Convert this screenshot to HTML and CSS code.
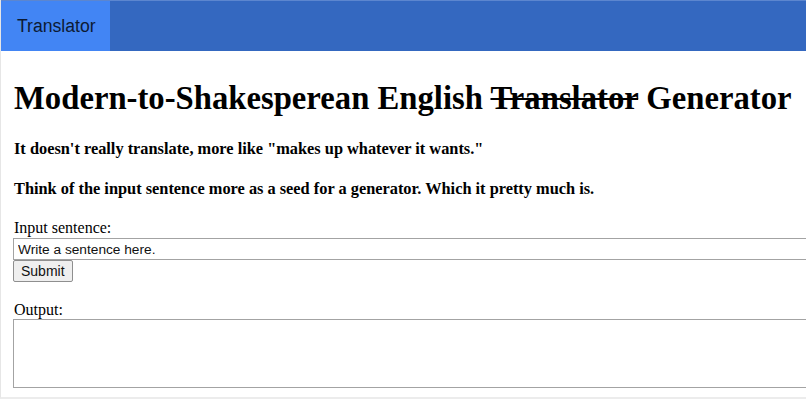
FILE: index.html
```html
<!DOCTYPE html>
<html>
<head>
<meta charset="utf-8">
<title>Translator</title>
<link rel="stylesheet" href="styles.css">
</head>
<body>
<div class="frame">
  <nav class="navbar">
    <a class="tab active" href="#">Translator</a>
  </nav>
  <main class="content">
    <h1 class="title">Modern-to-Shakesperean English <s>Translator</s> Generator</h1>
    <h4 class="note">It doesn't really translate, more like "makes up whatever it wants."</h4>
    <h4 class="note">Think of the input sentence more as a seed for a generator. Which it pretty much is.</h4>
    <form class="form">
      <label class="label" for="inp">Input sentence:</label>
      <input class="input" id="inp" type="text" value="Write a sentence here.">
      <button class="submit" type="button">Submit</button>
      <label class="label out-label" for="out">Output:</label>
      <textarea class="output" id="out"></textarea>
    </form>
  </main>
</div>
</body>
</html>
```
FILE: styles.css
```css
html, body {
  margin: 0;
  padding: 0;
  background: #ffffff;
}
body {
  font-family: "Liberation Serif", "Times New Roman", serif;
  color: #000;
  width: 806px;
  height: 413px;
  overflow: hidden;
}
.frame {
  border-left: 1px solid #e6e6e6;
  border-bottom: 2px solid #ececec;
  height: 397px;
  overflow: hidden;
}
.navbar {
  display: flex;
  height: 50px;
  background: #3468c0;
  border-top: 1px solid #5c86cf;
}
.tab {
  display: flex;
  align-items: center;
  padding: 0 16px 0 16px;
  width: 77px;
  font-family: "Liberation Sans", Arial, sans-serif;
  font-size: 17.6px;
  color: #0c1a33;
  text-decoration: none;
}
.tab.active {
  background: #4285f4;
}
.content {
  padding: 0 0 0 12px;
}
.title {
  font-size: 32.7px;
  font-weight: bold;
  margin: 29px 0 0 1px;
  line-height: 37px;
  white-space: nowrap;
}
.title s {
  text-decoration-thickness: 2px;
}
.note {
  font-size: 16.35px;
  font-weight: bold;
  margin: 23px 0 0 1px;
  line-height: 18px;
  white-space: nowrap;
}
.note + .note {
  margin-top: 22px;
}
.form {
  display: flex;
  flex-direction: column;
  align-items: flex-start;
  margin-top: 21px;
}
.label {
  font-size: 16px;
  line-height: 18px;
  margin-left: 1px;
}
.out-label {
  margin-top: 19px;
}
.input {
  box-sizing: border-box;
  width: calc(100% + 20px);
  height: 22px;
  margin: 1px 0 0 0;
  padding: 1px 4px;
  border: 1px solid #a3a3a3;
  font-family: "Liberation Sans", Arial, sans-serif;
  font-size: 13.7px;
  color: #111;
  background: #fff;
}
.submit {
  margin: 0;
  height: 22px;
  padding: 1px 7px;
  font-family: "Liberation Sans", Arial, sans-serif;
  font-size: 14px;
  color: #111;
  background: #efefef;
  border: 1px solid #8f8f8f;
  border-radius: 2px;
}
.output {
  box-sizing: border-box;
  width: calc(100% + 20px);
  height: 69px;
  margin: 0;
  border: 1px solid #a3a3a3;
  resize: none;
  background: #fff;
}
```
